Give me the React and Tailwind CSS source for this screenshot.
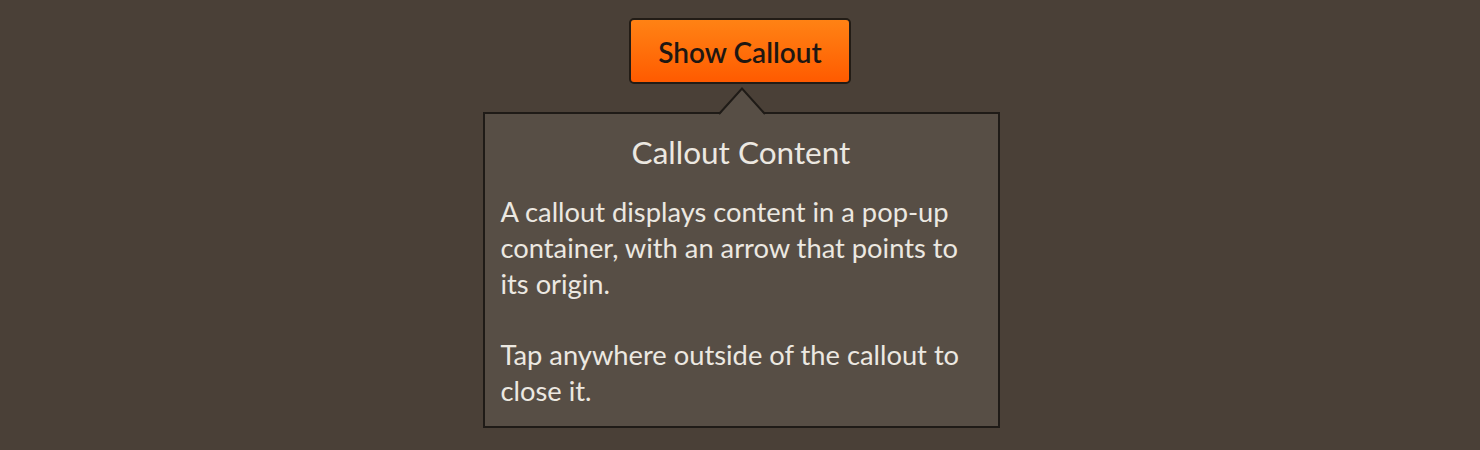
export default function App() {
  return (
    <div className="w-[1480px] h-[450px] bg-[#4a4037] flex flex-col items-center pt-[18px]" style={{ fontFamily: "Lato, 'Noto Sans', sans-serif" }}>
      <button className="w-[222px] h-[66px] rounded-[5px] border-2 border-[#221c16] bg-gradient-to-b from-[#ff8214] to-[#ff5a00] text-[#1e1712] text-[28px] font-semibold leading-none pt-[2px]">
        Show Callout
      </button>
      <div className="relative mt-[28px] ml-[2px] w-[517px] h-[316px] border-2 border-[#1f1b17] bg-[#574e45]">
        <svg className="absolute left-[233px] top-[-27px]" width="48" height="28" viewBox="0 0 48 28">
          <polygon points="2,27 24,2 46,27" fill="#574e45" />
          <polyline points="1,27 24,1.5 47,27" fill="none" stroke="#1f1b17" strokeWidth="2" />
        </svg>
        <div className="text-center text-[31.5px] text-[#ece8e1] mt-[18px] leading-[40px]">Callout Content</div>
        <div className="px-[16px] mt-[22px] text-[27.3px] leading-[35.8px] text-[#ece8e1]">
          <p>A callout displays content in a pop-up container, with an arrow that points to its origin.</p>
          <p className="mt-[35.8px]">Tap anywhere outside of the callout to close it.</p>
        </div>
      </div>
    </div>
  );
}
